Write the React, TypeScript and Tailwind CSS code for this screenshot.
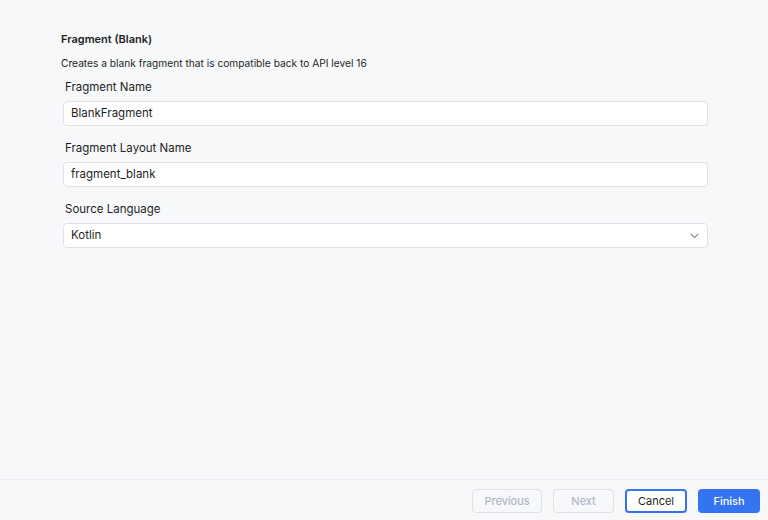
function Field({ label, value }: { label: string; value: string }) {
  return (
    <div className="flex flex-col">
      <label className="pl-[2px] text-[11.5px] leading-[16px] text-[#1e1f22]">{label}</label>
      <div className="mt-[6px] h-[25px] rounded-[4px] border border-[#dfe1e5] bg-white pl-[7px] text-[11.5px] leading-[23px] text-[#1e1f22]">
        {value}
      </div>
    </div>
  )
}

export default function App() {
  return (
    <div className="flex h-[520px] w-[768px] flex-col bg-[#f7f8fa]" style={{ fontFamily: 'Inter, "Noto Sans", sans-serif' }}>
      <div className="flex-1 pl-[61px] pr-[60px] pt-[31px]">
        <h1 className="text-[11px] font-semibold leading-[16px] text-[#1e1f22]">Fragment (Blank)</h1>
        <p className="mt-[9px] text-[10.2px] leading-[14px] text-[#1e1f22]">Creates a blank fragment that is compatible back to API level 16</p>
        <div className="mt-[9px] flex flex-col gap-[14px] pl-[2px]">
          <Field label="Fragment Name" value="BlankFragment" />
          <Field label="Fragment Layout Name" value="fragment_blank" />
          <div className="flex flex-col">
            <label className="pl-[2px] text-[11.5px] leading-[16px] text-[#1e1f22]">Source Language</label>
            <div className="mt-[6px] flex h-[25px] items-center justify-between rounded-[4px] border border-[#dfe1e5] bg-white pl-[7px] pr-[8px] text-[11.5px] text-[#1e1f22]">
              <span>Kotlin</span>
              <svg width="9" height="6" viewBox="0 0 9 6" fill="none" className="mt-[1px]">
                <path d="M1 1.2L4.5 4.6L8 1.2" stroke="#818594" strokeWidth="1.1" strokeLinecap="round" strokeLinejoin="round" />
              </svg>
            </div>
          </div>
        </div>
      </div>
      <div className="flex h-[41px] items-start justify-end gap-[11px] border-t border-[#ebecf0] pr-[8px] pt-[9px]">
        <button className="h-[24px] w-[70px] rounded-[4px] border border-[#dfe1e5] text-[11px] text-[#a8adbd]">Previous</button>
        <button className="h-[24px] w-[61px] rounded-[4px] border border-[#dfe1e5] text-[11px] text-[#a8adbd]">Next</button>
        <button className="h-[24px] w-[62px] rounded-[4px] border-2 border-[#3574f0] bg-white text-[11px] text-[#1e1f22]">Cancel</button>
        <button className="h-[24px] w-[62px] rounded-[4px] bg-[#3574f0] text-[11px] font-medium text-white">Finish</button>
      </div>
    </div>
  )
}
